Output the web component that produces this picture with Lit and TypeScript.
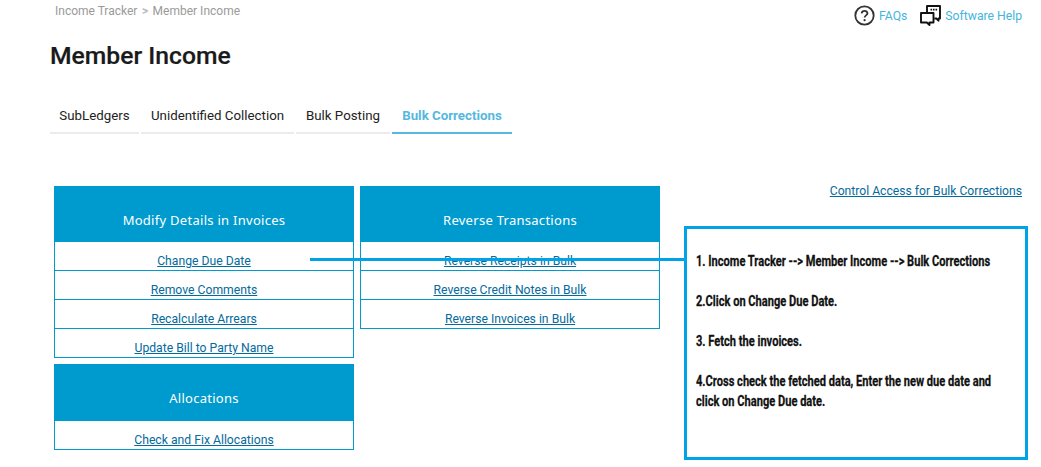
import { LitElement, html, css } from "lit";
import { customElement } from "lit/decorators.js";

@customElement("app-root")
export class AppRoot extends LitElement {
  static styles = css`
    :host { display: block; position: relative; width: 1041px; height: 467px; overflow: hidden; background: #fff; font-family: Roboto, "Liberation Sans", sans-serif; color: #212121; }
    .top { display: flex; justify-content: space-between; align-items: flex-start; height: 43px; }
    .crumb { margin: 4px 0 0 55px; font-size: 12px; line-height: 14px; color: #9a9a9a; display: flex; gap: 4.5px; }
    .crumb .sep { color: #bbb; font-weight: 700; }
    .help { display: flex; align-items: center; gap: 13px; margin: 5px 19px 0 0; font-size: 12.2px; color: #45b5de; }
    .help span { display: flex; align-items: center; gap: 4px; }
    .help svg { display: block; }
    h1 { margin: 0 0 0 50px; font-size: 24.7px; line-height: 26px; font-weight: 500; color: #1a1a1a; -webkit-text-stroke: 0.2px #1a1a1a; }
    .tabs { display: flex; gap: 2px; margin: 31px 0 0 50px; }
    .tab { box-sizing: border-box; height: 34px; line-height: 31px; text-align: center; font-size: 13.3px; border-bottom: 2px solid #ececec; color: #222; }
    .tab.active { color: #55b8df; font-weight: 700; border-bottom-color: #55b8df; }
    .body { display: flex; margin: 52px 0 0 54px; }
    .cols { display: flex; gap: 6px; align-items: flex-start; }
    .col { display: flex; flex-direction: column; gap: 6px; width: 300px; }
    .card { border-left: 1px solid #009bce; border-right: 1px solid #009bce; }
    .head { background: #009bce; margin: 0 -1px; height: 56px; padding-top: 26px; box-sizing: border-box; text-align: center; color: #fff; font-family: "Noto Sans", sans-serif; font-size: 13px; line-height: 17px; letter-spacing: 0.28px; }
    .head.tall { height: 57px; }
    .row { box-sizing: border-box; height: 29px; padding-top: 12px; text-align: center; font-size: 12.2px; line-height: 15px; border-bottom: 1px solid #009bce; }
    a { color: #056a9c; text-decoration: underline; }
    .side { margin-left: 24px; width: 344px; display: flex; flex-direction: column; }
    .access { text-align: right; font-size: 12.15px; line-height: 14px; margin: -2px 6px 0 0; height: 42px; }
    .note { box-sizing: border-box; height: 234px; border: 3px solid #00a2e8; padding: 22px 0 0 9px; color: #111; font-size: 15.5px; font-weight: 700; line-height: 20px; }
    .note p { margin: 0 0 20px; transform: scaleX(0.715); transform-origin: left; width: 450px; -webkit-text-stroke: 0.3px #111; white-space: nowrap; }
    .line { position: absolute; left: 310px; top: 258px; width: 375px; height: 3px; background: #00a2e8; }
  `;

  private card(title: string, items: string[], tall = false) {
    return html`<div class="card">
      <div class="head ${tall ? "tall" : ""}">${title}</div>
      ${items.map((i) => html`<div class="row"><a href="#">${i}</a></div>`)}
    </div>`;
  }

  render() {
    const tabs = [
      ["SubLedgers", 89],
      ["Unidentified Collection", 153],
      ["Bulk Posting", 94],
      ["Bulk Corrections", 120],
    ] as const;
    return html`
      <div class="top">
        <div class="crumb"><span>Income Tracker</span><span class="sep">&gt;</span><span>Member Income</span></div>
        <div class="help">
          <span>
            <svg width="21" height="21" viewBox="0 0 21 21"><circle cx="10.5" cy="10.5" r="9.2" fill="none" stroke="#333" stroke-width="1.8"/><path d="M7.6 8.3a3 3 0 0 1 5.9 0c0 2-2.9 2.2-2.9 4.2" fill="none" stroke="#333" stroke-width="1.8"/><circle cx="10.6" cy="15.2" r="1.1" fill="#333"/></svg>
            FAQs
          </span>
          <span>
            <svg width="21" height="21" viewBox="0 0 21 21"><path d="M7 7.500V1h13v12.500h-1.500v2.200l-2.200-2.200h-2" fill="none" stroke="#111" stroke-width="1.900" stroke-linejoin="round"/><path d="M1 8h12.500v9.500H9.500v2.500L6.800 17.500H1z" fill="#fff" stroke="#111" stroke-width="1.900" stroke-linejoin="round"/><path d="M10.500 4.700h1.600M13 4.700h1.600M15.500 4.700h1.600" stroke="#111" stroke-width="1.700"/></svg>
            Software Help
          </span>
        </div>
      </div>
      <h1>Member Income</h1>
      <div class="tabs">
        ${tabs.map(([t, w], i) => html`<div class="tab ${i === 3 ? "active" : ""}" style="width:${w}px">${t}</div>`)}
      </div>
      <div class="body">
        <div class="cols">
          <div class="col">
            ${this.card("Modify Details in Invoices", ["Change Due Date", "Remove Comments", "Recalculate Arrears", "Update Bill to Party Name"])}
            ${this.card("Allocations", ["Check and Fix Allocations"], true)}
          </div>
          <div class="col">
            ${this.card("Reverse Transactions", ["Reverse Receipts in Bulk", "Reverse Credit Notes in Bulk", "Reverse Invoices in Bulk"])}
          </div>
        </div>
        <div class="side">
          <div class="access"><a href="#">Control Access for Bulk Corrections</a></div>
          <div class="note">
            <p>1. Income Tracker --&gt; Member Income --&gt; Bulk Corrections</p>
            <p>2.Click on Change Due Date.</p>
            <p>3. Fetch the invoices.</p>
            <p>4.Cross check the fetched data, Enter the new due date and<br />click on Change Due date.</p>
          </div>
        </div>
      </div>
      <div class="line"></div>
    `;
  }
}
